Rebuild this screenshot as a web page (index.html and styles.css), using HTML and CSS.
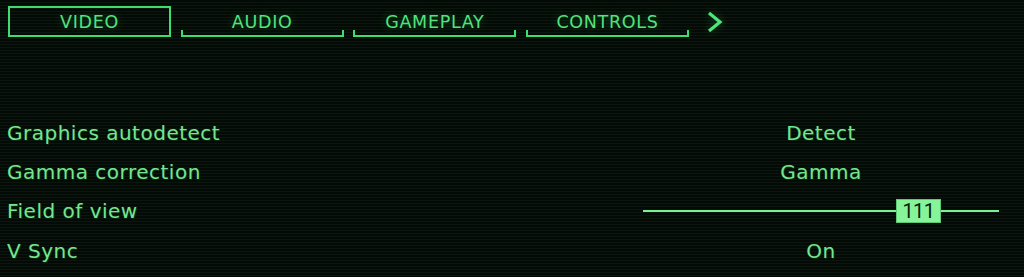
FILE: index.html
```html
<!DOCTYPE html>
<html>
<head>
<meta charset="utf-8">
<link rel="stylesheet" href="styles.css">
</head>
<body>
<div class="screen">
  <nav class="tabs">
    <div class="tab tab-active">VIDEO</div>
    <div class="tab tab-bracket">AUDIO</div>
    <div class="tab tab-bracket">GAMEPLAY</div>
    <div class="tab tab-bracket">CONTROLS</div>
    <div class="next">
      <svg width="18" height="24" viewBox="0 0 18 24"><polyline points="3,3 14,12 3,21" fill="none" stroke="#4ee67c" stroke-width="3.2" stroke-linejoin="miter"/></svg>
    </div>
  </nav>
  <div class="settings">
    <div class="row"><div class="label">Graphics autodetect</div><div class="value">Detect</div></div>
    <div class="row"><div class="label">Gamma correction</div><div class="value">Gamma</div></div>
    <div class="row"><div class="label">Field of view</div>
      <div class="value slider">
        <div class="track left" style="width:253px"></div>
        <div class="thumb">111</div>
        <div class="track right"></div>
      </div>
    </div>
    <div class="row"><div class="label">V Sync</div><div class="value">On</div></div>
  </div>
</div>
</body>
</html>
```
FILE: styles.css
```css
html, body {
  margin: 0;
  padding: 0;
}
body {
  width: 1024px;
  height: 277px;
  overflow: hidden;
  background-color: #050c07;
  background-image: repeating-linear-gradient(to bottom, #040a05 0px, #040a05 2px, #0b170e 2px, #0b170e 3px);
  font-family: "DejaVu Sans", Roboto, sans-serif;
  color: #72e68d;
}
.screen {
  display: flex;
  flex-direction: column;
}
.tabs {
  display: flex;
  align-items: center;
  padding: 6px 0 0 8px;
  gap: 9.67px;
  height: 31px;
}
.tab {
  position: relative;
  box-sizing: border-box;
  width: 163px;
  height: 31px;
  display: flex;
  align-items: center;
  justify-content: center;
  font-size: 17.5px;
  letter-spacing: 0.7px;
  color: #52e27e;
  text-shadow: 0 0 10px rgba(60, 220, 110, 0.35);
  padding-top: 1px;
}
.tab-active {
  border: 2px solid #3fdc6f;
}
.tab-bracket::after {
  content: "";
  position: absolute;
  left: 0;
  right: 0;
  bottom: 0;
  height: 7px;
  box-sizing: border-box;
  border: 2px solid #3fdc6f;
  border-top: none;
}
.next {
  display: flex;
  align-items: center;
  margin-left: 7px;
  height: 31px;
  filter: drop-shadow(0 0 4px rgba(60, 220, 110, 0.35));
}
.next svg {
  display: block;
}
.settings {
  display: flex;
  flex-direction: column;
  margin-top: 76px;
  padding-left: 7px;
}
.row {
  display: flex;
  align-items: center;
  height: 39.3px;
}
.label {
  flex: 1;
  font-size: 20px;
  letter-spacing: 0.5px;
  color: #74e68f;
  text-shadow: 1px 1px 1px #102a16, 0 0 2px #0e2413;
}
.value {
  width: 356px;
  margin-right: 25px;
  text-align: center;
  font-size: 20px;
  letter-spacing: 0.5px;
  color: #74e68f;
  text-shadow: 1px 1px 1px #102a16, 0 0 2px #0e2413;
}
.slider {
  display: flex;
  align-items: center;
  letter-spacing: 0;
}
.track {
  height: 2.5px;
  background: #7cf096;
}
.track.right {
  flex: 1;
}
.thumb {
  box-sizing: border-box;
  width: 45px;
  height: 24px;
  background: #86f59a;
  border: 1px solid #5fc874;
  color: #0c1a0e;
  font-family: Roboto, sans-serif;
  font-size: 20px;
  line-height: 22px;
  text-align: center;
  text-shadow: none;
  letter-spacing: -0.5px;
}
```
